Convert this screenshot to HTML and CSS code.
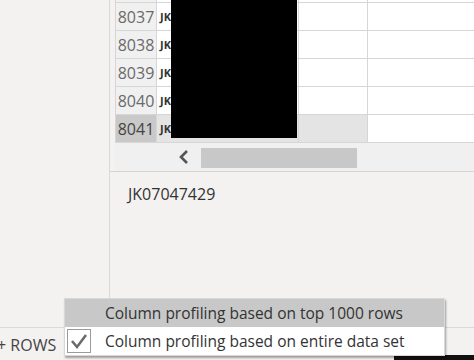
FILE: index.html
```html
<!DOCTYPE html>
<html lang="en">
<head>
    <meta charset="UTF-8">
    <meta name="viewport" content="width=device-width, initial-scale=1.0">
    <title>Column profiling</title>
    <link rel="stylesheet" href="styles.css">
</head>
<body>
<div class="main">
    <div class="sidebar"></div>
    <div class="content">
        <div class="grid-wrap">
            <table class="grid">
                <tr class="cut"><td class="num"></td><td class="c1"></td><td class="c2"></td><td class="c3"></td></tr>
                <tr><td class="num">8037</td><td class="c1">JK</td><td class="c2"></td><td class="c3"></td></tr>
                <tr><td class="num">8038</td><td class="c1">JK</td><td class="c2"></td><td class="c3"></td></tr>
                <tr><td class="num">8039</td><td class="c1">JK</td><td class="c2"></td><td class="c3"></td></tr>
                <tr><td class="num">8040</td><td class="c1">JK</td><td class="c2"></td><td class="c3"></td></tr>
                <tr class="selected"><td class="num">8041</td><td class="c1">JK</td><td class="c2"></td><td class="c3"></td></tr>
            </table>
            <!-- bloque tapado en la captura -->
            <div class="redacted"></div>
            <div class="hscroll">
                <svg class="arrow" width="12" height="16" viewBox="0 0 12 16">
                    <path d="M9 2 L3 8 L9 14" fill="none" stroke="#555" stroke-width="2.6"/>
                </svg>
                <div class="thumb"></div>
            </div>
        </div>
        <div class="detail">JK07047429</div>
    </div>
</div>
<div class="bottom">
    <span class="rows">+ ROWS</span>
</div>
<div class="taskbar"></div>

<div class="menu">
    <div class="item hover"><span class="check"></span>Column profiling based on top 1000 rows</div>
    <div class="item"><span class="check checked">
        <svg width="22" height="22" viewBox="0 0 22 22">
            <path d="M4 11 L9 17 L18 5" fill="none" stroke="#6b6b6b" stroke-width="2.6"/>
        </svg>
    </span>Column profiling based on entire data set</div>
</div>
</body>
</html>
```

FILE: styles.css
```css
body {
    margin: 0;
    width: 474px;
    height: 360px;
    overflow: hidden;
    background-color: #f3f2f1;
    font-family: "Open Sans", "Noto Sans", sans-serif;
    position: relative;
}
.main {
    display: flex;
    height: 327px;
}
.sidebar {
    width: 109px;
    flex-shrink: 0;
    border-right: 1px solid #dcdad8;
}
.content {
    flex: 1;
    min-width: 0;
    overflow: hidden;
    display: flex;
    flex-direction: column;
}
.grid-wrap {
    position: relative;
    padding-left: 5px;
    border-bottom: 1px solid #d6d4d2;
}
.grid {
    border-collapse: collapse;
    table-layout: fixed;
    width: 370px;
    background-color: #fff;
}
.grid td {
    border: 1px solid #d6d6d6;
    height: 27px;
    padding: 0;
    white-space: nowrap;
    overflow: hidden;
}
.grid .cut td {
    height: 2px;
    border-top: none;
}
.grid .num {
    width: 40px;
    background-color: #f0f0f0;
    color: #6a6a6a;
    font-size: 16px;
    text-align: center;
}
.grid .c1 {
    width: 142px;
    font-size: 11px;
    font-weight: bold;
    color: #333;
    padding-left: 3px;
    box-sizing: border-box;
}
.grid .c2 {
    width: 68px;
}
.selected td {
    background-color: #e4e4e4;
}
.grid .selected .c3 {
    background-color: #fff;
}
.grid .selected .num {
    background-color: #c9c9c9;
    color: #444;
}
.redacted {
    position: absolute;
    left: 61px;
    top: 0;
    width: 126px;
    height: 138px;
    background-color: #000;
}
.hscroll {
    display: flex;
    align-items: center;
    height: 28px;
    background-color: #f0f0f0;
    padding-left: 63px;
}
.arrow {
    margin-right: 11px;
}
.thumb {
    width: 156px;
    height: 20px;
    background-color: #c8c8c8;
    margin-top: 1px;
}
.detail {
    padding: 11px 0 0 18px;
    font-size: 16px;
    color: #333;
}
.bottom {
    border-top: 1px solid #dcdad8;
    height: 32px;
    display: flex;
    align-items: center;
}
.rows {
    font-size: 16px;
    color: #444;
    margin-left: -3px;
    padding-top: 1px;
    white-space: nowrap;
}
.taskbar {
    position: absolute;
    left: 394px;
    top: 355px;
    width: 80px;
    height: 5px;
    background-color: #111;
}
.menu {
    position: absolute;
    left: 64px;
    top: 298px;
    width: 379px;
    background-color: #fff;
    border: 1px solid #d8d8d8;
    box-shadow: 1px 2px 2px rgba(0, 0, 0, 0.35);
}
.item {
    display: flex;
    align-items: center;
    height: 28px;
    font-size: 15.5px;
    color: #333;
}
.item.hover {
    background-color: #c8c8c8;
}
.check {
    width: 24px;
    height: 24px;
    margin: 0 14px 0 2px;
    box-sizing: border-box;
}
.check.checked {
    border: 1px solid #9a9a9a;
    display: flex;
    align-items: center;
    justify-content: center;
}
```
